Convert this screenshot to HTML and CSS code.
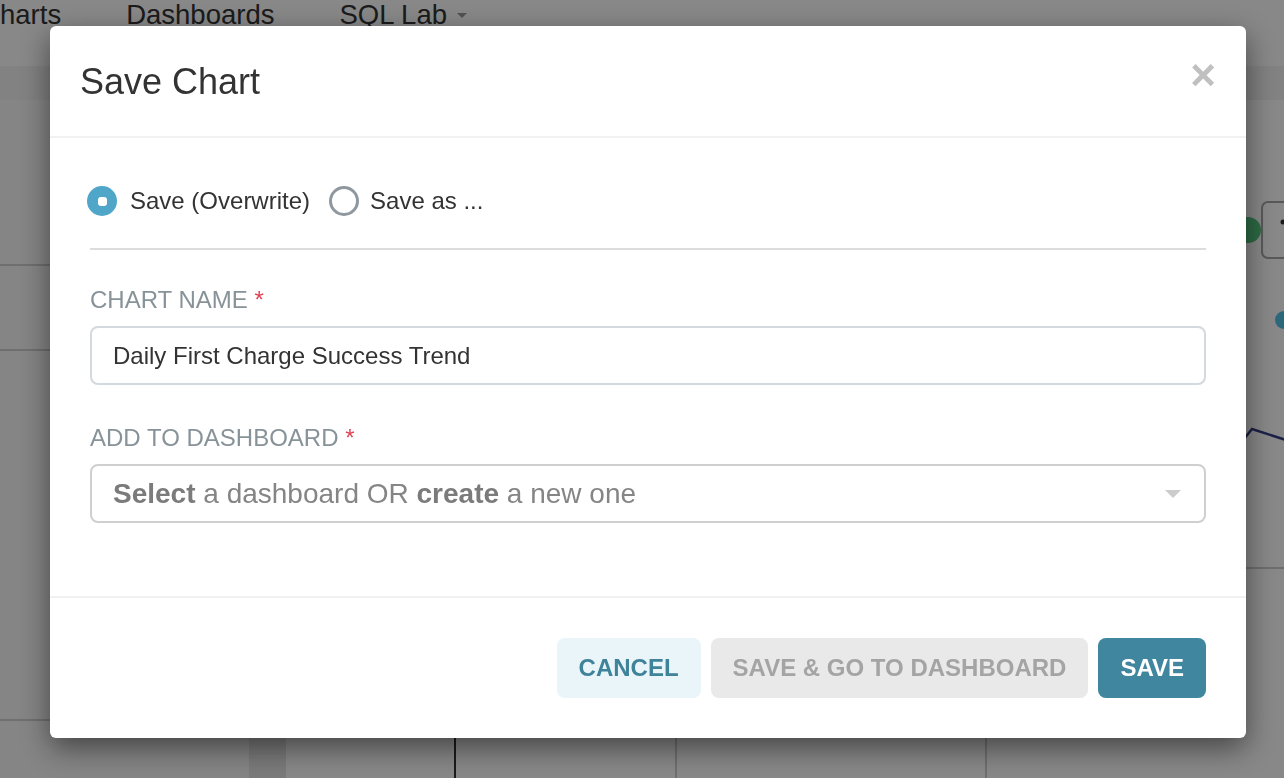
FILE: index.html
```html
<!DOCTYPE html>
<html lang="en">
<head>
<meta charset="utf-8">
<title>Save Chart</title>
<link rel="stylesheet" href="styles.css">
</head>
<body>
<div class="page">
  <nav class="navbar">
    <span class="nav-item">harts</span>
    <span class="nav-item">Dashboards</span>
    <span class="nav-item">SQL Lab<span class="caret"></span></span>
  </nav>
  <div class="subbar"></div>
  <div class="main">
    <aside class="sidebar">
      <div class="side-section s1"></div>
      <div class="side-section s2"></div>
      <div class="side-section s3"></div>
    </aside>
    <div class="gutter"></div>
    <section class="content">
      <svg class="chart" width="998" height="678" viewBox="0 0 998 678">
        <circle cx="962" cy="130" r="13" fill="#54c781"/>
        <rect x="976" y="102" width="60" height="56" rx="6" fill="#fff" stroke="#a6a6a6" stroke-width="2"/>
        <circle cx="997" cy="122" r="2.5" fill="#333"/>
        <circle cx="998" cy="220" r="9" fill="#52c4e8"/>
        <polyline points="958,339 966,329 1000,340" fill="none" stroke="#353e87" stroke-width="2.5"/>
        <line x1="958" y1="468" x2="998" y2="468" stroke="#cfcfcf" stroke-width="2"/>
        <line x1="169" y1="560" x2="169" y2="678" stroke="#333" stroke-width="2"/>
        <line x1="390" y1="560" x2="390" y2="678" stroke="#d0d0d0" stroke-width="2"/>
        <line x1="700" y1="560" x2="700" y2="678" stroke="#d0d0d0" stroke-width="2"/>
      </svg>
    </section>
  </div>
</div>

<div class="overlay">
  <div class="modal" role="dialog">
    <div class="modal-header">
      <h4 class="modal-title">Save Chart</h4>
      <button class="close" type="button">×</button>
    </div>
    <div class="modal-body">
      <div class="radio-row">
        <label class="radio-option"><span class="radio-dot checked"></span>Save (Overwrite)</label>
        <label class="radio-option"><span class="radio-dot unchecked"></span>Save as ...</label>
      </div>
      <hr class="divider">
      <div class="form-group">
        <label class="field-label">Chart name <span class="required">*</span></label>
        <input class="text-input" type="text" value="Daily First Charge Success Trend">
      </div>
      <div class="form-group">
        <label class="field-label">Add to dashboard <span class="required">*</span></label>
        <div class="select">
          <span class="placeholder"><b>Select</b> a dashboard OR <b>create</b> a new one</span>
          <span class="select-arrow"></span>
        </div>
      </div>
    </div>
    <div class="modal-footer">
      <button class="btn btn-cancel" type="button">Cancel</button>
      <button class="btn btn-disabled" type="button">Save &amp; go to dashboard</button>
      <button class="btn btn-primary" type="button">Save</button>
    </div>
  </div>
</div>
</body>
</html>
```

FILE: styles.css
```css
html, body {
  margin: 0;
  padding: 0;
}
body {
  width: 1284px;
  height: 778px;
  overflow: hidden;
  background: #fff;
  font-family: "Liberation Sans", Arial, Helvetica, sans-serif;
  color: #333;
}

/* ---------- background page ---------- */
.page {
  display: flex;
  flex-direction: column;
  height: 778px;
}
.navbar {
  height: 66px;
  display: flex;
  align-items: flex-start;
  gap: 65px;
  background: #fff;
}
.nav-item {
  font-size: 27.5px;
  line-height: 30px;
  color: #333;
  white-space: nowrap;
}
.caret {
  display: inline-block;
  margin-left: 10px;
  vertical-align: 6px;
  border-left: 5px solid transparent;
  border-right: 5px solid transparent;
  border-top: 5px solid #999;
}
.subbar {
  height: 34px;
  background: #f3f3f3;
}
.main {
  flex: 1;
  display: flex;
}
.sidebar {
  width: 249px;
  background: #fafafa;
}
.side-section {
  border-bottom: 2px solid #d0d0d0;
}
.s1 { height: 164px; }
.s2 { height: 83px; }
.s3 { height: 368px; }
.gutter {
  width: 37px;
  background: #e6e6e6;
}
.content {
  flex: 1;
  overflow: hidden;
}
.chart {
  display: block;
}

/* ---------- modal ---------- */
.overlay {
  position: fixed;
  inset: 0;
  background: rgba(0, 0, 0, 0.467);
  display: flex;
  align-items: flex-start;
  padding: 26px 0 0 50px;
  box-sizing: border-box;
}
.modal {
  width: 1196px;
  background: #fff;
  border-radius: 6px;
  box-shadow: 0 10px 30px rgba(0, 0, 0, 0.5);
}
.modal-header {
  display: flex;
  justify-content: space-between;
  align-items: flex-start;
  padding: 36px 30px 34px 30px;
  border-bottom: 2px solid #f1f1f1;
}
.modal-title {
  margin: 0;
  font-size: 36px;
  line-height: 40px;
  font-weight: 400;
  color: #333;
}
.close {
  margin-top: -9px;
  padding: 0;
  border: 0;
  background: none;
  font-family: "Liberation Sans", Arial, sans-serif;
  font-size: 44px;
  font-weight: 700;
  line-height: 1;
  color: #c0c0c0;
}

.modal-body {
  padding: 48px 40px 73px;
}
.radio-row {
  display: flex;
  align-items: center;
  height: 30px;
  margin-left: -3px;
  font-size: 24px;
  line-height: 28px;
  color: #333;
}
.radio-option {
  display: flex;
  align-items: center;
  gap: 13px;
  margin-right: 19px;
}
.radio-option + .radio-option {
  gap: 11px;
}
.radio-dot {
  width: 30px;
  height: 30px;
  border-radius: 50%;
  box-sizing: border-box;
  display: flex;
  align-items: center;
  justify-content: center;
}
.radio-dot.checked {
  background: #4fa6c9;
}
.radio-dot.checked::after {
  content: "";
  width: 9px;
  height: 9px;
  border-radius: 3px;
  background: #fff;
}
.radio-dot.unchecked {
  border: 3px solid #8f989f;
  background: #fff;
}
.divider {
  height: 2px;
  margin: 32px 0 36px;
  border: 0;
  background: #dcdcdc;
}
.form-group + .form-group {
  margin-top: 39px;
}
.field-label {
  display: block;
  margin-bottom: 12px;
  font-size: 24px;
  line-height: 28px;
  color: #879399;
  text-transform: uppercase;
}
.required {
  color: #e04355;
}
.text-input {
  display: block;
  box-sizing: border-box;
  width: 100%;
  height: 59px;
  margin: 0;
  padding: 0 21px;
  border: 2px solid #d4d9de;
  border-radius: 8px;
  outline: none;
  font-family: "Liberation Sans", Arial, sans-serif;
  font-size: 24px;
  color: #333;
  background: #fff;
}
.select {
  box-sizing: border-box;
  height: 59px;
  display: flex;
  align-items: center;
  justify-content: space-between;
  padding: 0 23px 0 21px;
  border: 2px solid #cfcfcf;
  border-radius: 8px;
  font-size: 28px;
  color: #858585;
}
.placeholder b {
  font-weight: 700;
  color: #7b7b7b;
}
.select-arrow {
  width: 0;
  height: 0;
  border-left: 8.5px solid transparent;
  border-right: 8.5px solid transparent;
  border-top: 8px solid #cccccc;
}

.modal-footer {
  display: flex;
  justify-content: flex-end;
  gap: 10px;
  padding: 40px;
  border-top: 2px solid #f1f1f1;
}
.btn {
  height: 60px;
  padding: 0 22px;
  border: 0;
  border-radius: 8px;
  font-family: "Liberation Sans", Arial, sans-serif;
  font-size: 24px;
  font-weight: 700;
  text-transform: uppercase;
}
.btn-cancel {
  background: #e9f5f8;
  color: #3f839b;
}
.btn-disabled {
  background: #e9e9e9;
  color: #a4a4a4;
}
.btn-primary {
  background: #40869f;
  color: #fff;
}
```
